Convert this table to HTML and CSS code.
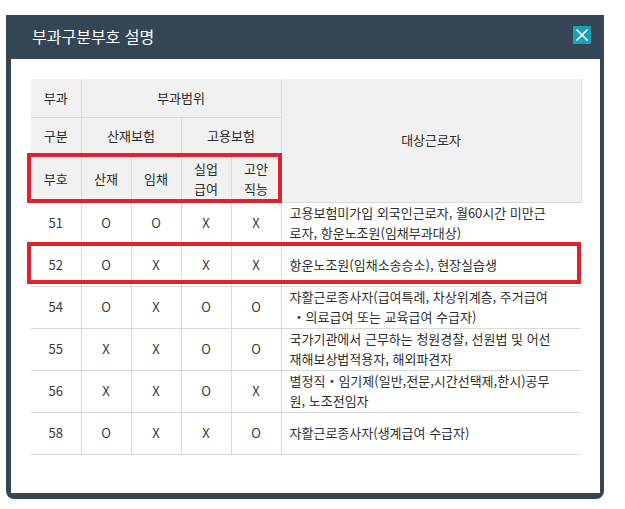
FILE: index.html
```html
<!DOCTYPE html>
<html lang="ko">
<head>
<meta charset="utf-8">
<title>부과구분부호 설명</title>
<link rel="stylesheet" href="styles.css">
</head>
<body>
<div class="page">
  <div class="dialog">
    <div class="dialog-header">
      <h1 class="dialog-title">부과구분부호 설명</h1>
      <button class="close-btn" type="button" aria-label="닫기">
        <svg width="18" height="18" viewBox="0 0 18 18"><path d="M3.5 3.5 L14.5 14.5 M14.5 3.5 L3.5 14.5" stroke="#fff" stroke-width="1.6" fill="none"/></svg>
      </button>
    </div>
    <div class="dialog-body">
      <div class="table-wrap">
        <table class="code-table">
          <colgroup>
            <col class="c-s"><col class="c-s"><col class="c-s"><col class="c-s"><col class="c-s"><col class="c-l">
          </colgroup>
          <thead>
            <tr class="h1">
              <th>부과</th>
              <th colspan="4">부과범위</th>
              <th rowspan="3" class="last">대상근로자</th>
            </tr>
            <tr class="h2">
              <th>구분</th>
              <th colspan="2">산재보험</th>
              <th colspan="2">고용보험</th>
            </tr>
            <tr class="h3">
              <th>부호</th>
              <th>산재</th>
              <th>임채</th>
              <th>실업<br>급여</th>
              <th>고안<br>직능</th>
            </tr>
          </thead>
          <tbody>
            <tr>
              <td>51</td><td>O</td><td>O</td><td>X</td><td>X</td>
              <td class="desc">고용보험미가입 외국인근로자, 월60시간 미만근<br>로자, 항운노조원(임채부과대상)</td>
            </tr>
            <tr>
              <td>52</td><td>O</td><td>X</td><td>X</td><td>X</td>
              <td class="desc">항운노조원(임채소송승소), 현장실습생</td>
            </tr>
            <tr>
              <td>54</td><td>O</td><td>X</td><td>O</td><td>O</td>
              <td class="desc">자활근로종사자(급여특례, 차상위계층, 주거급여<br><span class="dot">・</span>의료급여 또는 교육급여 수급자)</td>
            </tr>
            <tr>
              <td>55</td><td>X</td><td>X</td><td>O</td><td>O</td>
              <td class="desc">국가기관에서 근무하는 청원경찰, 선원법 및 어선<br>재해보상법적용자, 해외파견자</td>
            </tr>
            <tr>
              <td>56</td><td>X</td><td>X</td><td>O</td><td>X</td>
              <td class="desc">별정직・임기제(일반,전문,시간선택제,한시)공무<br>원, 노조전임자</td>
            </tr>
            <tr>
              <td>58</td><td>O</td><td>X</td><td>X</td><td>O</td>
              <td class="desc">자활근로종사자(생계급여 수급자)</td>
            </tr>
          </tbody>
        </table>
        <div class="mark mark-head"></div>
        <div class="mark mark-row"></div>
      </div>
    </div>
  </div>
</div>
</body>
</html>
```

FILE: styles.css
```css
* { box-sizing: border-box; }
html, body { margin: 0; padding: 0; background: #fff; }
body {
  font-family: "Noto Sans CJK KR", "Noto Sans", sans-serif;
  color: #333;
}
.page {
  padding: 15px 21px 0 6px;
}
.dialog {
  width: 598px;
  background: #344556;
  padding: 0 4px 6px 5px;
  border-radius: 0 0 8px 8px;
}
.dialog-header {
  height: 44px;
  display: flex;
  align-items: center;
  justify-content: space-between;
  padding: 0 9px 0 21px;
}
.dialog-title {
  margin: 0;
  font-size: 16px;
  font-weight: 400;
  color: #fff;
  line-height: 20px;
  margin-top: -2px;
}
.close-btn {
  width: 18px;
  height: 18px;
  padding: 0;
  border: 0;
  background: #19a2b4;
  display: flex;
  align-items: center;
  justify-content: center;
  margin-top: -5px;
}
.dialog-body {
  background: #fff;
  padding: 20px 19px 38px 20px;
}
.table-wrap {
  position: relative;
}
.code-table {
  width: 550px;
  border-collapse: collapse;
  table-layout: fixed;
  font-size: 13px;
  line-height: 20px;
}
.c-s { width: 50px; }
.c-l { width: 300px; }
.code-table th {
  background: #f1f1f1;
  font-weight: 400;
  color: #2b2b2b;
  text-align: center;
  padding: 0;
  border: 1px solid #dadada;
}
.code-table tr > :first-child { border-left: 0; }
.code-table thead tr.h1 th { border-top: 0; height: 38px; }
.code-table tr.h2 th { height: 38px; }
.code-table tr.h3 th { height: 47px; }
.code-table th.last { border-right: 1px solid #dcdcdc; }
.code-table td {
  height: 42px;
  padding: 0;
  text-align: center;
  color: #3a3a3a;
  border: 1px solid #dadada;
}
.code-table td:last-child { border-right: 0; }
.code-table td.desc {
  text-align: left;
  padding: 0 2px 0 8px;
  white-space: nowrap;
  color: #2f2f2f;
}
.dot { margin-left: 3px; }
.mark {
  position: absolute;
  border: 4px solid #dc2430;
  pointer-events: none;
}
.mark-head {
  left: -4px;
  top: 74px;
  width: 255px;
  height: 50px;
}
.mark-row {
  left: -4px;
  top: 163px;
  width: 554px;
  height: 42px;
}
```
